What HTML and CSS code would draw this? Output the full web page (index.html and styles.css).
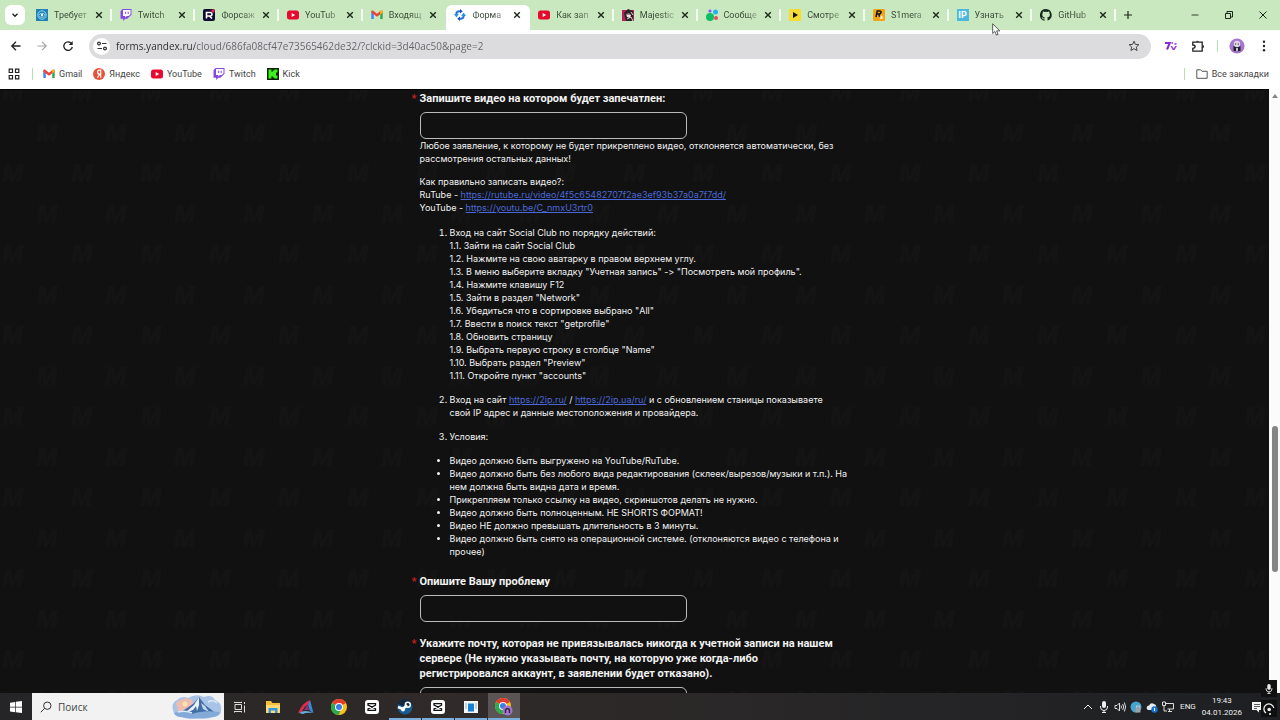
FILE: index.html
```html
<!DOCTYPE html>
<html lang="ru">
<head>
    <meta charset="UTF-8">
    <meta name="viewport" content="width=device-width, initial-scale=1.0">
    <title>Форма</title>
    <link rel="stylesheet" href="styles.css">
</head>
<body>
    <svg class="defs" aria-hidden="true">
        <symbol id="youtube" viewBox="0 0 12 12"><rect y="1.500" width="12" height="9" rx="2.500" fill="#e8092f"/><path d="M4.700 4v4l3.500-2z" fill="#fff"/></symbol>
        <symbol id="twitch" viewBox="0 0 12 12"><path d="M2.500 0L.5 2.200v7.600h2.700V12l2.200-2.200h1.900L11.500 5.700V0z" fill="#8748e0"/><path d="M3 1h7.500v4.300L8.700 7H6.800L5.200 8.600V7H3z" fill="#fff"/><path d="M5.700 2.700v2.400M8.200 2.700v2.400" stroke="#8748e0"/></symbol>
        <symbol id="gmail" viewBox="0 0 12 12"><path d="M.3 3v7h2.500V5z" fill="#4285f4"/><path d="M11.700 3v7H9.200V5z" fill="#34a853"/><path d="M.3 3.500V2.600C.3 1.500 1.400 1.200 2.200 1.800L6 4.700l3.800-2.900c.8-.6 1.900-.3 1.900.8v.9L6 7.800z" fill="#ea4335"/><path d="M9.200 2.300l.6-.5c.8-.6 1.900-.3 1.900.8v1L9.200 5.400z" fill="#fbbc04"/></symbol>
        <symbol id="close" viewBox="0 0 8 8"><path d="M1.200 1.200l5.600 5.600m0-5.600l-5.600 5.600" stroke="#1d291a" stroke-width="1.400"/></symbol>
        <symbol id="chrome" viewBox="0 0 16 16"><circle cx="8" cy="8" r="8" fill="#fbc116"/><path d="M8 8L1.100 4A8 8 0 0 1 14.900 4z" fill="#e33b2e"/><path d="M8 8L1.100 4A8 8 0 0 0 7.300 16l3.400-6.200z" fill="#2da94f"/><circle cx="8" cy="8" r="4" fill="#fff"/><circle cx="8" cy="8" r="3" fill="#3c7de6"/></symbol>
        <symbol id="capcut" viewBox="0 0 14 14"><rect width="14" height="14" rx="3" fill="#fff"/><path d="M10.500 5V3.700H3V5l8 4M10.500 9v1.300H3V9l8-4" fill="none" stroke="#111" stroke-width="1.300"/></symbol>
        <symbol id="mic" viewBox="0 0 12 12"><rect x="4" y="0" width="4" height="7" rx="2"/><path d="M2.500 5v1a3.500 3.500 0 0 0 7 0V5M6 9.500V12M4 11.500h4" fill="none" stroke="#eee"/></symbol>
    </svg>

    <div class="tabstrip">
        <button class="tab-search" aria-label="Поиск вкладок"><svg viewBox="0 0 8 8" width="8" height="8"><path d="M1.500 2.800L4 5.300l2.500-2.500" fill="none" stroke="#222" stroke-width="1.400"/></svg></button>
        <div class="tabs">
            <div class="tab"><svg class="fav" viewBox="0 0 12 12"><rect width="12" height="12" fill="#1e82b8"/><circle cx="6" cy="6" r="4.200" fill="none" stroke="#b5e4f5" stroke-width=".8"/><path d="M2.500 6q3.500-3.500 7 0M3 7q3 3 6-.5" fill="none" stroke="#b5e4f5" stroke-width=".8"/><circle cx="6" cy="6" r="1.200" fill="#e6f8ff"/></svg><button class="tab-name">Требует</button><button class="close" aria-label="Закрыть"><svg><use href="#close"/></svg></button></div>
            <div class="tab"><svg class="fav"><use href="#twitch"/></svg><button class="tab-name">Twitch</button><button class="close" aria-label="Закрыть"><svg><use href="#close"/></svg></button></div>
            <div class="tab"><svg class="fav" viewBox="0 0 12 12"><rect width="12" height="12" rx="2" fill="#100b32"/><path d="M3.500 9.500v-6h4q1.500 0 1.500 1.700T7.500 7h-4M6.500 7L9 9.500" fill="none" stroke="#fff" stroke-width="1.600"/><circle cx="10" cy="2" r="1.800" fill="#e22450"/></svg><button class="tab-name">Форсаж</button><button class="close" aria-label="Закрыть"><svg><use href="#close"/></svg></button></div>
            <div class="tab"><svg class="fav"><use href="#youtube"/></svg><button class="tab-name">YouTub</button><button class="close" aria-label="Закрыть"><svg><use href="#close"/></svg></button></div>
            <div class="tab before-active"><svg class="fav"><use href="#gmail"/></svg><button class="tab-name">Входящ</button><button class="close" aria-label="Закрыть"><svg><use href="#close"/></svg></button></div>
            <div class="tab active"><svg class="fav" viewBox="0 0 12 12"><path d="M7 2.300H5.500Q2.300 2.300 2.300 5.500M5 9.700h1.500q3.200 0 3.200-3.200" fill="none" stroke="#2474dd" stroke-width="2"/><path d="M0 5h4.800L2.400 8.500zM12 7H7.200l2.400-3.500z" fill="#2592ee"/><path d="M6 0v4.600l2.800-2.300zM6 12V7.400L3.200 9.700z" fill="#1851bd"/></svg><button class="tab-name">Форма</button><button class="close" aria-label="Закрыть"><svg><use href="#close"/></svg></button></div>
            <div class="tab"><svg class="fav"><use href="#youtube"/></svg><button class="tab-name">Как зап</button><button class="close" aria-label="Закрыть"><svg><use href="#close"/></svg></button></div>
            <div class="tab"><svg class="fav" viewBox="0 0 12 12"><path d="M0 1h12v11H0z" fill="#b52058"/><path d="M2 4l4-4 5 2v10H4z" fill="#292326"/><path d="M4 5l3-1 2 2-1 3-3-1z" fill="#eee6e3"/><path d="M3 5h6" stroke="#382b31"/><path d="M5 10l4-2 2 4M9 3l2 3" fill="none" stroke="#d9d3d5"/></svg><button class="tab-name">Majestic</button><button class="close" aria-label="Закрыть"><svg><use href="#close"/></svg></button></div>
            <div class="tab"><svg class="fav" viewBox="0 0 12 12"><circle cx="4" cy="8" r="4" fill="#10bd67"/><circle cx="9.500" cy="3" r="2.500" fill="#24b3ed"/><circle cx="4" cy="2" r="1.600" fill="#7b5cf0"/><circle cx="10" cy="9" r="2" fill="#f14660"/></svg><button class="tab-name">Сообще</button><button class="close" aria-label="Закрыть"><svg><use href="#close"/></svg></button></div>
            <div class="tab"><svg class="fav" viewBox="0 0 12 12"><rect width="12" height="12" rx="1" fill="#f9da32"/><path d="M4 3v6l5-3z" fill="#111"/></svg><button class="tab-name">Смотре</button><button class="close" aria-label="Закрыть"><svg><use href="#close"/></svg></button></div>
            <div class="tab"><svg class="fav" viewBox="0 0 12 12"><rect width="12" height="12" rx="1" fill="#f3a51a"/><path d="M3 8l1.200-6h2.500q1.600 0 1.300 1.500T6 5H4M6 5l.5 3" fill="none" stroke="#16120a" stroke-width="1.500"/><path d="M8.500 6l.6 1.600h1.500L9.400 8.700l.5 1.600-1.400-.9-1.400.9.500-1.600-1.200-1.100h1.500z" fill="#fff3cf"/></svg><button class="tab-name">S1mera</button><button class="close" aria-label="Закрыть"><svg><use href="#close"/></svg></button></div>
            <div class="tab"><span class="fav ip">IP</span><button class="tab-name">Узнать</button><button class="close" aria-label="Закрыть"><svg><use href="#close"/></svg></button></div>
            <div class="tab"><svg class="fav" viewBox="0 0 16 16"><path fill="#14281e" d="M8 0a8 8 0 0 0-2.500 15.600c.4.100.5-.2.500-.4v-1.500c-2.200.5-2.700-1-2.700-1-.4-.9-.9-1.200-.9-1.200-.7-.5.1-.5.1-.5.800.1 1.200.8 1.200.8.700 1.300 1.900.9 2.400.7 0-.5.300-.9.500-1.100-1.800-.2-3.600-.9-3.600-4 0-.9.300-1.600.8-2.100-.1-.200-.4-1 .1-2.100 0 0 .7-.2 2.200.8a7.500 7.500 0 0 1 4 0c1.500-1 2.200-.8 2.200-.8.400 1.100.2 1.900.1 2.100.5.600.8 1.300.8 2.100 0 3.100-1.900 3.700-3.700 3.900.3.300.6.800.6 1.500v2.200c0 .2.100.5.500.4A8 8 0 0 0 8 0z"/></svg><button class="tab-name">GitHub</button><button class="close" aria-label="Закрыть"><svg><use href="#close"/></svg></button></div>
        </div>
        <div class="window-area">
            <button class="icon-btn" aria-label="Новая вкладка"><svg viewBox="0 0 10 10" width="10" height="10"><path d="M5 1v8M1 5h8" stroke="#1c2919" stroke-width="1.200"/></svg></button>
            <div class="window-controls">
                <button class="icon-btn" aria-label="Свернуть"><svg viewBox="0 0 10 10" width="10" height="10"><path d="M1.500 5h7" stroke="#34402f"/></svg></button>
                <button class="icon-btn" aria-label="Развернуть"><svg viewBox="0 0 10 10" width="10" height="10"><path d="M1.500 3.500h5v5h-5zM3 3V1.500h5.500V7H7" fill="none" stroke="#1c2919"/></svg></button>
                <button class="icon-btn" aria-label="Закрыть окно"><svg viewBox="0 0 10 10" width="10" height="10"><path d="M1.500 1.500l7 7m0-7l-7 7" stroke="#1c2919"/></svg></button>
            </div>
        </div>
    </div>

    <div class="toolbar">
        <button class="icon-btn" aria-label="Назад"><svg viewBox="0 0 12 12" width="12" height="12"><path d="M10.500 6H2M6 1.800L1.800 6 6 10.200" fill="none" stroke="#202020" stroke-width="1.300"/></svg></button>
        <button class="icon-btn" aria-label="Вперёд"><svg viewBox="0 0 12 12" width="12" height="12"><path d="M1.500 6H10M6 1.800L10.200 6 6 10.200" fill="none" stroke="#a5a5a5" stroke-width="1.200"/></svg></button>
        <button class="icon-btn" aria-label="Обновить"><svg viewBox="0 0 12 12" width="12" height="12"><path d="M9.600 3.600A4.300 4.300 0 1 0 10.300 7" fill="none" stroke="#202020" stroke-width="1.300"/><path d="M10.700 1v3.900H6.800z" fill="#202020"/></svg></button>
        <div class="omnibox">
            <button class="site-info" aria-label="Сведения о сайте"><svg viewBox="0 0 12 12" width="12" height="12" fill="none" stroke="#333" stroke-width="1.200"><circle cx="3" cy="3.500" r="1.400"/><path d="M6 3.500h4.500M1.500 8.500H6"/><circle cx="9" cy="8.500" r="1.400"/></svg></button>
            <input class="address" type="text" aria-label="Адресная строка" value="forms.yandex.ru/cloud/686fa08cf47e73565462de32/?clckid=3d40ac50&amp;page=2">
            <button class="icon-btn" aria-label="Добавить в закладки"><svg viewBox="0 0 12 12" width="12" height="12"><path d="M6 1.200l1.400 3.200 3.500.3-2.600 2.300.8 3.500L6 8.700l-3.100 1.800.8-3.500L1.100 4.700l3.500-.3z" fill="none" stroke="#444"/></svg></button>
        </div>
        <div class="extensions">
            <button class="icon-btn" aria-label="7TV"><svg viewBox="0 0 12 12" width="12" height="12" fill="none" stroke="#8a2bd4" stroke-width="2"><path d="M0 3h4.800L2 9.500"/><path d="M5.500 6h1.700l1.300 2.500L10.300 6H12L9.500 10H7.800z" fill="#9a3be0" stroke="none"/><path d="M6.500 3h1.500M9.500 4h2" stroke-width="1.500"/></svg></button>
            <button class="icon-btn" aria-label="Расширения"><svg viewBox="0 0 12 12" width="12" height="12"><path d="M.8 2.200h9.400v8.900H.8V8.300q2.300-.1 2.300-1.700T.8 5z" fill="none" stroke="#222" stroke-width="1.300"/><path d="M4 1.700a1.600 1.600 0 0 1 3 0zM10.500 5a1.500 1.500 0 0 1 0 3z" fill="#222"/></svg></button>
            <span class="divider"></span>
            <button class="icon-btn" aria-label="Профиль"><svg viewBox="0 0 16 16" width="16" height="16"><circle cx="8" cy="8" r="7.600" fill="#a876d2"/><path d="M4.500 13V8h7v5z" fill="#241d2b"/><circle cx="8" cy="6" r="3.200" fill="#ddd6e6"/><path d="M6 6h1.200M8.800 6H10M7 11h2v2.500H7z" stroke="#332a3b"/><path d="M7.200 10h1.600v3.500H7.200z" fill="#eee"/></svg></button>
            <button class="icon-btn" aria-label="Меню"><svg viewBox="0 0 12 12" width="12" height="12" fill="#222"><circle cx="6" cy="1.800" r="1.200"/><circle cx="6" cy="6" r="1.200"/><circle cx="6" cy="10.200" r="1.200"/></svg></button>
        </div>
    </div>

    <nav class="bookmarks">
        <button class="icon-btn" aria-label="Группы вкладок"><svg viewBox="0 0 12 12" width="12" height="12" fill="none" stroke="#222" stroke-width="1.200"><path d="M1.200 1.200h3.300v3.300H1.200zM7.500 1.200h3.300v3.300H7.500zM1.200 7.500h3.300v3.300H1.200zM7.500 7.500h3.300v3.300H7.500z"/></svg></button>
        <span class="divider"></span>
        <a href="#"><svg class="fav"><use href="#gmail"/></svg>Gmail</a>
        <a href="#"><svg class="fav" viewBox="0 0 12 12"><circle cx="6" cy="6" r="6" fill="#e5533d"/><path d="M7.700 9.800V2.200H6.600q-2 0-2 2t2.600 2.200M6.600 6.200L4.500 9.800" fill="none" stroke="#fff" stroke-width="1.200"/></svg>Яндекс</a>
        <a href="#"><svg class="fav"><use href="#youtube"/></svg>YouTube</a>
        <a href="#"><svg class="fav"><use href="#twitch"/></svg>Twitch</a>
        <a href="#"><svg class="fav" viewBox="0 0 12 12"><path d="M0 0h12v12H0z" fill="#0b2205"/><path d="M1.500 1.500h3v2.300h1.200V2.500h1.500v-1h3.300v3H9V6h-.8H9v1.500h1.500v3H7.200v-1H5.700V8.200H4.500v2.300h-3z" fill="#3ef01c"/></svg>Kick</a>
        <span class="divider last"></span>
        <a href="#"><svg class="fav" viewBox="0 0 12 12"><path d="M.8 10.300V1.800h3.700L6 3.300h5.200v7z" fill="none" stroke="#555"/></svg>Все закладки</a>
    </nav>

    <div class="viewport">
        <main class="page">
            <form class="survey">
                <div class="question">
                    <label class="title" for="video"><span class="star">*</span><span>Запишите видео на котором будет запечатлен:</span></label>
                    <input class="field" id="video" type="text">
                    <div class="hint">
                        <p>Любое заявление, к которому не будет прикреплено видео, отклоняется автоматически, без<br>рассмотрения остальных данных!</p>
                        <p>Как правильно записать видео?:<br>
                            RuTube - <a href="#">https://rutube.ru/video/4f5c65482707f2ae3ef93b37a0a7f7dd/</a><br>
                            YouTube - <a href="#">https://youtu.be/C_nmxU3rtr0</a></p>
                        <ol>
                            <li>Вход на сайт Social Club по порядку действий:<br>
                                1.1. Зайти на сайт Social Club<br>
                                1.2. Нажмите на свою аватарку в правом верхнем углу.<br>
                                1.3. В меню выберите вкладку "Учетная запись" -&gt; "Посмотреть мой профиль".<br>
                                1.4. Нажмите клавишу F12<br>
                                1.5. Зайти в раздел "Network"<br>
                                1.6. Убедиться что в сортировке выбрано "All"<br>
                                1.7. Ввести в поиск текст "getprofile"<br>
                                1.8. Обновить страницу<br>
                                1.9. Выбрать первую строку в столбце "Name"<br>
                                1.10. Выбрать раздел "Preview"<br>
                                1.11. Откройте пункт "accounts"</li>
                            <li>Вход на сайт <a href="#">https://2ip.ru/</a> / <a href="#">https://2ip.ua/ru/</a> и с обновлением станицы показываете<br>свой IP адрес и данные местоположения и провайдера.</li>
                            <li>Условия:</li>
                        </ol>
                        <ul>
                            <li>Видео должно быть выгружено на YouTube/RuTube.</li>
                            <li>Видео должно быть без любого вида редактирования (склеек/вырезов/музыки и т.п.). На<br>нем должна быть видна дата и время.</li>
                            <li>Прикрепляем только ссылку на видео, скриншотов делать не нужно.</li>
                            <li>Видео должно быть полноценным. НЕ SHORTS ФОРМАТ!</li>
                            <li>Видео НЕ должно превышать длительность в 3 минуты.</li>
                            <li>Видео должно быть снято на операционной системе. (отклоняются видео с телефона и<br>прочее)</li>
                        </ul>
                    </div>
                </div>
                <div class="question">
                    <label class="title" for="problem"><span class="star">*</span><span>Опишите Вашу проблему</span></label>
                    <input class="field" id="problem" type="text">
                </div>
                <div class="question">
                    <label class="title" for="mail"><span class="star">*</span><span>Укажите почту, которая не привязывалась никогда к учетной записи на нашем<br>сервере (Не нужно указывать почту, на которую уже когда-либо<br>регистрировался аккаунт, в заявлении будет отказано).</span></label>
                    <input class="field" id="mail" type="text">
                </div>
            </form>
        </main>
        <div class="scrollbar">
            <svg viewBox="0 0 8 6" width="8" height="6"><path d="M1 5l3-4 3 4z" fill="#858585"/></svg>
            <span class="above"></span>
            <span class="thumb"></span>
            <span class="below"></span>
        </div>
    </div>

    <footer class="taskbar">
        <button class="start" aria-label="Пуск"><svg viewBox="0 0 12 12" width="12" height="12" fill="#fff"><path d="M0 1.700l5.300-.8v4.800H0zM6 .8L12 0v5.700H6zM0 6.400h5.300v4.800L0 10.400zM6 6.400h6V12l-6-.8z"/></svg></button>
        <div class="search">
            <svg viewBox="0 0 12 12" width="12" height="12"><circle cx="7.300" cy="4.700" r="3.700" fill="none" stroke="#333"/><path d="M4.700 7.300L.8 11.200" stroke="#333"/></svg>
            <input type="text" placeholder="Поиск" aria-label="Поиск">
            <svg class="art" viewBox="0 0 50 24" width="50" height="24"><path d="M5 5Q10 0 16 3q8-5 16-1 8-3 11 3 7 3 6 9 1 7-7 8-8 3-16 1-10 2-16-1Q2 22 1 15-1 8 5 5z" fill="#a9c3e6"/><path d="M4 8q6-6 15-4l5 10-18 2z" fill="#efbdb0"/><circle cx="13" cy="9" r="2.500" fill="#ffe2a6"/><path d="M6 19L18 11l4-3 5-6 6 8 4 3 8 6z" fill="#416da4"/><path d="M27 2l-5 8-9 8 8-3 3-4 1 5 2-6z" fill="#eaf1fb"/><path d="M29 8l2 6 6 3-4-6z" fill="#c4d6ef"/><path d="M2 18q10-4 18 1 11-4 28-2-2 5-8 5-16 3-32 0-5-1-6-4z" fill="#83a9d8"/><path d="M36 7q5-3 9 1M6 17q8-2 14 1" fill="none" stroke="#dce8f7" stroke-width="1.500"/></svg>
        </div>
        <div class="apps">
            <button class="app" aria-label="Представление задач"><svg viewBox="0 0 12 12" width="12" height="12" fill="none" stroke="#ddd"><path d="M.5 2V.8M7.500 2V.8M1 3.500h6.500v5H1zM.5 10v1.500M7.500 10v1.500M.5 1.500h7M.5 10.500h7M10.500 1v2M10.500 4.500v7"/></svg></button>
            <button class="app" aria-label="Проводник"><svg viewBox="0 0 16 14" width="16" height="14"><path d="M1 1h5l1.500 2H15v10H1z" fill="#f6bf39"/><path d="M1 5h14v8H1z" fill="#ffd978"/><path d="M3.500 13V8h9v5h-2.500v-2.500H6V13z" fill="#3795d9"/></svg></button>
            <button class="app" aria-label="Majestic"><svg viewBox="0 0 16 16" width="16" height="16"><path d="M0 14Q4 4 12 1l-1 4q-5 2-7 8z" fill="#dd2c48"/><path d="M12 1l3.500 13-3.500-2-2-6z" fill="#3788d8"/><path d="M1 14q6-4 14 0-7-1-10 1z" fill="#66aee7"/><path d="M6 11l4-6 1 6z" fill="#8c3471"/></svg></button>
            <button class="app" aria-label="Chrome"><svg width="16" height="16"><use href="#chrome"/></svg></button>
            <button class="app" aria-label="CapCut"><svg width="14" height="14"><use href="#capcut"/></svg></button>
            <button class="app running" aria-label="Steam"><svg viewBox="0 0 16 16" width="16" height="16"><circle cx="8" cy="8" r="7.500" fill="#165b91"/><path d="M1 5a7.500 7.500 0 0 1 14 0L8 8z" fill="#102943"/><path d="M1 8l5 2 4-4" fill="none" stroke="#fff" stroke-width="2.500"/><circle cx="10.800" cy="5.700" r="2.500" fill="none" stroke="#fff" stroke-width="1.400"/><circle cx="6" cy="10.500" r="2" fill="#fff"/></svg></button>
            <button class="app running" aria-label="CapCut"><svg width="14" height="14"><use href="#capcut"/></svg></button>
            <button class="app running" aria-label="Приложение"><svg viewBox="0 0 14 12" width="14" height="12"><path d="M0 0h14v12H0z" fill="#f5f8fb"/><path d="M4 2.500h6v8H4z" fill="#1580d5"/><path d="M1 3h2M1 5h2M1 7h2M11 3h2M11 5h2M11 7h2" stroke="#96aec0"/></svg></button>
            <button class="app running current" aria-label="Chrome"><svg viewBox="0 0 18 18" width="18" height="18"><use href="#chrome" width="16" height="16"/><circle cx="12.500" cy="12.500" r="5" fill="#a276cf"/><path d="M10.500 15v-3q2-3 4 0v3" fill="none" stroke="#33213f" stroke-width="1.400"/></svg></button>
        </div>
        <div class="tray">
            <svg viewBox="0 0 12 12" width="12" height="12"><path d="M2 8l4-4 4 4" fill="none" stroke="#eee"/></svg>
            <svg width="12" height="12" fill="#eee"><use href="#mic"/></svg>
            <svg viewBox="0 0 12 12" width="12" height="12" fill="none" stroke="#ddd"><path d="M1 4.500h2L5.500 2v8L3 7.500H1zM7 4.500q1 1.500 0 3M8.700 3q2 3 0 6M10.400 1.500q2.400 4.500 0 9"/></svg>
            <svg viewBox="0 0 12 12" width="12" height="12"><circle cx="6" cy="6" r="5.500" fill="#45a5ce"/><path d="M5.500 6.500h5v5h-5z" fill="#9ba3aa"/><path d="M6.500 6.500V5h3v1.500" fill="none" stroke="#d0d0d0"/></svg>
            <svg viewBox="0 0 12 12" width="12" height="12"><path d="M2 9Q0 8 .8 6 1 4.500 3 4.500 5 1 8 3q2 0 2.200 2.500V9z" fill="#e7eaec"/><circle cx="8.500" cy="8.500" r="3.200" fill="#1374d2"/><path d="M8.500 7v3" stroke="#fff"/></svg>
            <svg viewBox="0 0 12 12" width="12" height="12" fill="none" stroke="#ddd"><path d="M3.500 2.500h8v5.500h-6M.5 1v3.500h3V1zM2 4.500V10h3M6 10.500h4M7.500 8v2.500"/></svg>
            <span class="lang">ENG</span>
            <div class="clock"><span>19:43</span><span>04.01.2026</span></div>
            <svg viewBox="0 0 12 12" width="12" height="12"><path d="M1 1h10v8H8v2.500L5.500 9H1z" fill="#f4f4f4"/><path d="M3 3.500h6M3 5.500h6M3 7.500h3" stroke="#333" stroke-width=".8"/></svg>
        </div>
    </footer>

    <div class="overlay">
        <span><svg viewBox="0 0 12 12" width="10" height="10" fill="#eee"><use href="#mic"/></svg></span>
        <span><svg viewBox="0 0 12 12" width="12" height="12"><path d="M3 10A5 5 0 1 1 10.800 5M6 11h2" fill="none" stroke="#eee" stroke-width="1.300"/><circle cx="6.200" cy="6.500" r="1.800" fill="#eee"/></svg></span>
    </div>
    <svg class="cursor" viewBox="0 0 9 13" width="9" height="13"><path d="M.7.800v9.700l2.200-2 1.500 3.600 1.700-.8-1.500-3.400h3.200z" fill="#fff" stroke="#333" stroke-width=".8"/></svg>
</body>
</html>
```
FILE: styles.css
```css
* {
    box-sizing: border-box;
}

body {
    margin: 0;
    height: 100vh;
    display: flex;
    flex-direction: column;
    overflow: hidden;
    font-family: Roboto, "Open Sans", sans-serif;
    font-size: 9px;
    background: #fff;
}

button {
    border: none;
    background: none;
    padding: 0;
    font: inherit;
    color: inherit;
}

svg {
    flex: none;
}

.defs {
    position: absolute;
    width: 0;
    height: 0;
}

.icon-btn {
    display: flex;
    align-items: center;
    justify-content: center;
    width: 16px;
    height: 16px;
}

.fav {
    flex: none;
    width: 12px;
    height: 12px;
}

.divider {
    width: 1px;
    height: 12px;
    background: #b9dfb2;
}

/* tabs */
.tabstrip {
    display: flex;
    align-items: center;
    height: 30px;
    flex: none;
    background: #c9e8bf;
}

.tab-search {
    display: flex;
    align-items: center;
    justify-content: center;
    width: 20px;
    height: 20px;
    margin: 0 3px 0 5px;
    border-radius: 6px;
    background: #fff;
}

.tabs {
    display: flex;
    flex: 1;
    align-self: stretch;
    min-width: 0;
}

.tab {
    display: flex;
    align-items: center;
    flex: 1 1 0;
    min-width: 0;
    padding: 0 9px 0 8px;
    gap: 6px;
    color: #3b4b38;
    background: linear-gradient(#f4fbf1, #f4fbf1) right center / 2px 12px no-repeat;
}

.tab.before-active {
    background: none;
}

.tab.active {
    margin-top: 5px;
    padding-bottom: 5px;
    border-radius: 6px 6px 0 0;
    background: #fff;
}

.tab-name {
    flex: 1;
    min-width: 0;
    overflow: hidden;
    white-space: nowrap;
    text-align: left;
    -webkit-mask-image: linear-gradient(to right, #000 60%, rgba(0,0,0,0.3));
    mask-image: linear-gradient(to right, #000 60%, rgba(0,0,0,0.3));
}

.close {
    display: flex;
}

.close svg {
    width: 8px;
    height: 8px;
}

.ip {
    background: #4cb7df;
    color: #fff;
    font-weight: bold;
    line-height: 12px;
    text-align: center;
}

.window-area {
    display: flex;
    align-items: center;
    justify-content: space-between;
    width: 164px;
    padding: 0 9px 0 4px;
}

.window-controls {
    display: flex;
    gap: 18px;
}

/* address row */
.toolbar {
    display: flex;
    align-items: center;
    gap: 10px;
    height: 33px;
    flex: none;
    padding: 0 8px 1px;
}

.omnibox {
    display: flex;
    align-items: center;
    flex: 1;
    height: 25px;
    margin-left: 3px;
    padding: 0 9px 0 4px;
    border-radius: 13px;
    background: #dcdcde;
}

.site-info {
    display: flex;
    align-items: center;
    justify-content: center;
    width: 17px;
    height: 17px;
    border-radius: 50%;
    background: #fff;
}

/* host part is darker than the path */
.address {
    flex: 1;
    margin: 0 0 0 6px;
    padding: 0;
    border: none;
    outline: none;
    font: 10px "Open Sans", sans-serif;
    color: #5e5e62;
    background: linear-gradient(to right, #2c2c2e 79px, #636367 79px);
    -webkit-background-clip: text;
    background-clip: text;
    -webkit-text-fill-color: transparent;
}

.extensions {
    display: flex;
    align-items: center;
    gap: 11px;
    margin-left: 2px;
}

/* bookmarks */
.bookmarks {
    display: flex;
    align-items: center;
    gap: 11px;
    height: 26px;
    flex: none;
    padding: 0 11px 4px 6px;
}

.bookmarks a {
    display: flex;
    align-items: center;
    gap: 4px;
    color: #444;
    text-decoration: none;
}

.bookmarks .divider {
    margin-right: -1px;
    margin-left: -1px;
}

.bookmarks .last {
    margin-left: auto;
    margin-right: 0;
}

/* form page */
.viewport {
    display: flex;
    flex: 1;
    min-height: 0;
    overflow: hidden;
}

.page {
    flex: 1;
    overflow: hidden;
    border-top: 1px solid #000;
    background: #111 url("data:image/svg+xml,%3Csvg xmlns='http://www.w3.org/2000/svg' width='69' height='81'%3E%3Cg fill='%23141414' font-family='Roboto' font-size='25' font-weight='900' font-style='italic' text-anchor='middle'%3E%3Ctext x='13' y='72'%3EM%3C/text%3E%3Ctext x='47' y='32'%3EM%3C/text%3E%3C/g%3E%3C/svg%3E") 0 20px;
    color: #f2f2f2;
}

.survey {
    display: flex;
    flex-direction: column;
    gap: 14px;
    width: 430px;
    margin: 0 auto;
    padding-top: 1px;
}

.title {
    display: flex;
    margin: 0 0 6px -8px;
    font-size: 11px;
    font-weight: bold;
    line-height: 15px;
}

.star {
    flex: none;
    width: 8px;
    color: #c62020;
}

.field {
    display: block;
    width: 267px;
    height: 27px;
    padding: 0 8px;
    border: 1px solid #bbb;
    border-radius: 6px;
    outline: none;
    background: #111;
    color: #f2f2f2;
}

.hint {
    padding-bottom: 2px;
    font-family: Inter, Roboto, sans-serif;
    font-size: 9px;
    font-variant-ligatures: none;
    line-height: 13px;
    white-space: nowrap;
}

.hint p {
    margin: 0 0 10px;
}

.hint a {
    color: #4a68d8;
}

.hint ol,
.hint ul {
    margin: 0;
    padding-left: 30px;
}

.hint ol {
    padding-top: 2px;
}

.hint ol li {
    margin-bottom: 11px;
}

.scrollbar {
    display: flex;
    flex-direction: column;
    align-items: center;
    width: 11px;
    padding-top: 4px;
    background: #fbfbfb;
}

.above {
    flex: 327;
}

.thumb {
    flex: 146;
    width: 6px;
    border-radius: 3px;
    background: #858585;
}

.below {
    flex: 121;
}

/* taskbar */
.taskbar {
    display: flex;
    height: 27px;
    flex: none;
    background: linear-gradient(to right, #252527, #302a29 35%, #292728 60%, #1d1f22);
    color: #eee;
}

.start {
    display: flex;
    align-items: center;
    justify-content: center;
    width: 32px;
}

.search {
    display: flex;
    align-items: center;
    gap: 6px;
    width: 192px;
    padding: 0 2px 0 8px;
    background: #f2f2f2;
}

.search input {
    flex: 1;
    min-width: 0;
    padding: 0;
    border: none;
    outline: none;
    background: none;
    font: 10px "Open Sans", sans-serif;
}

.search input::placeholder {
    color: #444;
}

.apps {
    display: flex;
    flex: 1;
    gap: 1px;
}

.app {
    display: flex;
    align-items: center;
    justify-content: center;
    width: 32px;
}

.running {
    border-bottom: 2px solid #79addb;
    padding-top: 2px;
}

.current {
    background: #5b5454;
}

.tray {
    display: flex;
    align-items: center;
    gap: 4px;
    padding-right: 17px;
    font-size: 8px;
}

.lang {
    margin-left: 2px;
}

.clock {
    display: flex;
    flex-direction: column;
    align-items: center;
    margin: 0 5px 0 2px;
    line-height: 12px;
}

.overlay {
    position: absolute;
    right: 3px;
    bottom: 3px;
    display: flex;
    flex-direction: column;
    gap: 3px;
}

.overlay span {
    display: flex;
    align-items: center;
    justify-content: center;
    width: 16px;
    height: 17px;
    background: #101010;
}

.cursor {
    position: absolute;
    left: 992px;
    top: 23px;
}
```
